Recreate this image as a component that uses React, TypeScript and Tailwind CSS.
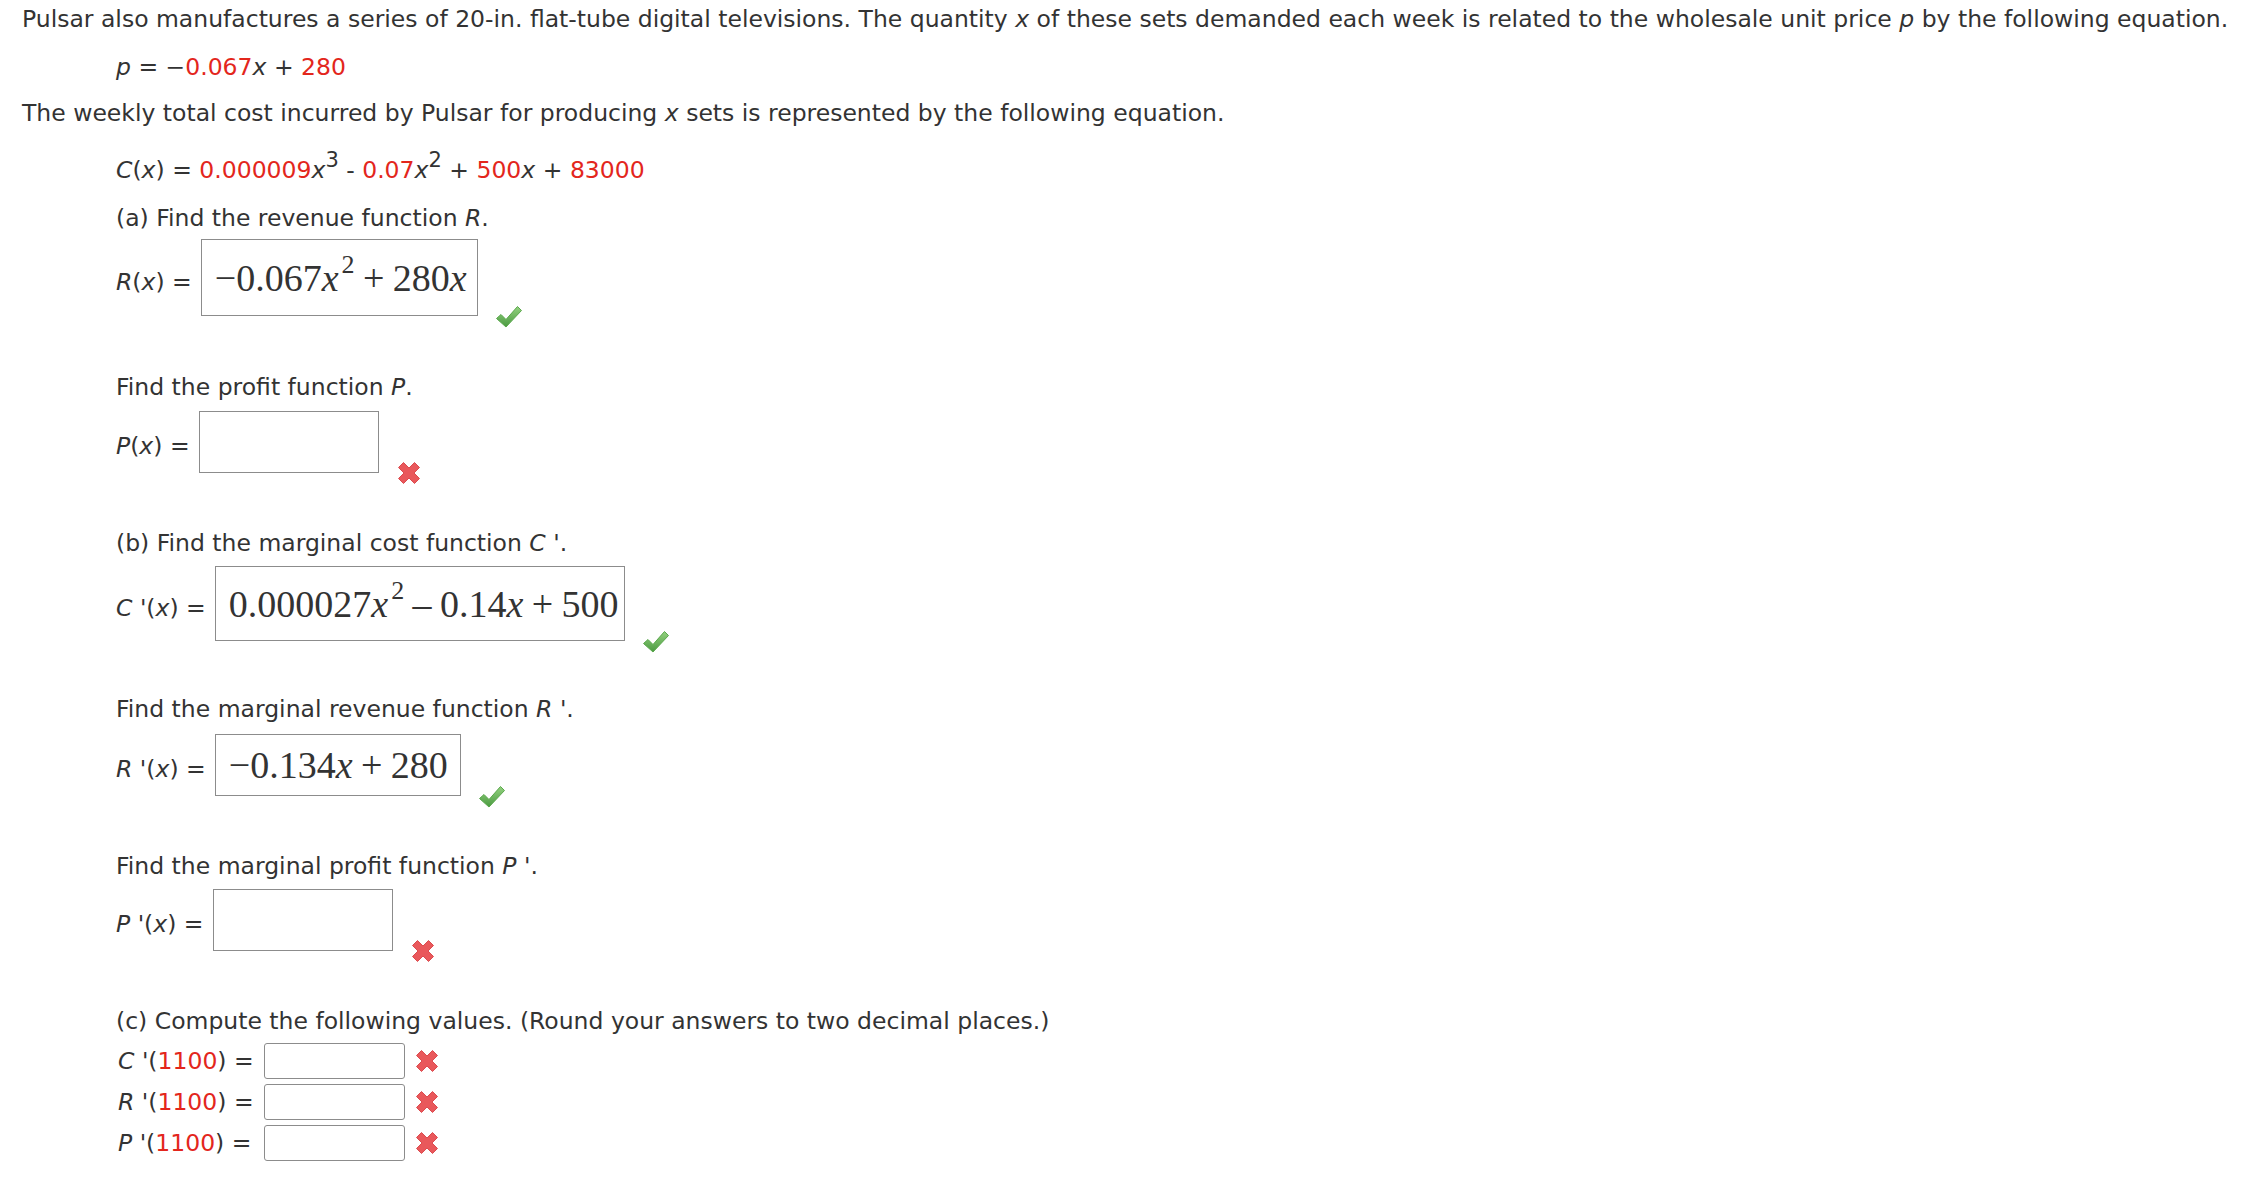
import React from 'react'

const red = 'text-[#e3261c]'

function Check() {
  return (
    <svg width="30" height="27" viewBox="0 0 30 27" className="block">
      <defs>
        <linearGradient id="chk" x1="0" y1="0" x2="0" y2="1">
          <stop offset="0" stopColor="#93d17f" />
          <stop offset="1" stopColor="#4b9a41" />
        </linearGradient>
      </defs>
      <path
        d="M2.5 15.5 L7 11.5 L12 16.5 L23.5 3.5 L27.5 7.5 L12 24 Z"
        fill="url(#chk)"
        stroke="#5aa84c"
        strokeWidth="1"
        strokeLinejoin="round"
      />
    </svg>
  )
}

function Cross() {
  return (
    <svg width="28" height="28" viewBox="0 0 28 28" className="block">
      <path
        d="M3.5 8.5 L8.5 3.5 L14 9 L19.5 3.5 L24.5 8.5 L19 14 L24.5 19.5 L19.5 24.5 L14 19 L8.5 24.5 L3.5 19.5 L9 14 Z"
        fill="#e9585b"
        stroke="#dc4a4e"
        strokeWidth="1"
        strokeLinejoin="round"
      />
    </svg>
  )
}

function V({ children }: { children: React.ReactNode }) {
  return <i>{children}</i>
}

function Op({ children }: { children: React.ReactNode }) {
  return <span className="px-[0.22em]">{children}</span>
}

function Math({ children }: { children: React.ReactNode }) {
  return (
    <span className="font-['Liberation_Serif',serif] text-[38px] text-[#333] leading-none whitespace-nowrap">
      {children}
    </span>
  )
}

interface AnswerRowProps {
  label: React.ReactNode
  boxClass: string
  correct: boolean
  children?: React.ReactNode
}

function AnswerRow({ label, boxClass, correct, children }: AnswerRowProps) {
  return (
    <div className="flex items-center">
      <span className="mt-[8px] whitespace-nowrap">{label}</span>
      <div
        className={`ml-[9px] border border-[#8c8c8c] bg-white flex items-center pl-[13px] ${boxClass}`}
      >
        {children}
      </div>
      <div className="self-end ml-[16px] -mb-[14px]">{correct ? <Check /> : <Cross />}</div>
    </div>
  )
}

function ValueRow({ fn }: { fn: string }) {
  return (
    <div className="flex items-center h-[36px]">
      <span className="whitespace-nowrap w-[146px]">
        <V>{fn}</V> '(<span className={red}>1100</span>) =
      </span>
      <div className="w-[141px] h-[36px] border border-[#8c8c8c] rounded-[3px] bg-white" />
      <div className="ml-[8px]">
        <Cross />
      </div>
    </div>
  )
}

export default function App() {
  return (
    <div className="min-h-screen bg-white text-[#333] font-['DejaVu_Sans',Verdana,sans-serif] text-[23.5px] leading-[28px] pt-[5px] pl-[22px]">
      <p className="whitespace-nowrap">
        Pulsar also manufactures a series of 20-in. flat-tube digital televisions. The quantity{' '}
        <V>x</V> of these sets demanded each week is related to the wholesale unit price <V>p</V> by
        the following equation.
      </p>
      <p className="mt-[20px] pl-[94px]">
        <V>p</V> = −<span className={red}>0.067</span>
        <V>x</V> + <span className={red}>280</span>
      </p>
      <p className="mt-[18px]">
        The weekly total cost incurred by Pulsar for producing <V>x</V> sets is represented by the
        following equation.
      </p>

      <div className="pl-[94px]">
        <p className="mt-[29px]">
          <V>C</V>(<V>x</V>) = <span className={red}>0.000009</span>
          <V>x</V>
          <sup className="text-[21px] -top-[11px]">3</sup> - <span className={red}>0.07</span>
          <V>x</V>
          <sup className="text-[21px] -top-[11px]">2</sup> + <span className={red}>500</span>
          <V>x</V> + <span className={red}>83000</span>
        </p>

        <p className="mt-[20px]">
          (a) Find the revenue function <V>R</V>.
        </p>
        <div className="mt-[7px]">
          <AnswerRow
            label={
              <>
                <V>R</V>(<V>x</V>) =
              </>
            }
            boxClass="w-[277px] h-[77px]"
            correct
          >
            <Math>
              −0.067<i>x</i>
              <sup className="text-[26px] -top-[18px] ml-[3px]">2</sup>
              <Op>+</Op>280<i>x</i>
            </Math>
          </AnswerRow>
        </div>

        <p className="mt-[57px]">
          Find the profit function <V>P</V>.
        </p>
        <div className="mt-[10px]">
          <AnswerRow
            label={
              <>
                <V>P</V>(<V>x</V>) =
              </>
            }
            boxClass="w-[180px] h-[62px]"
            correct={false}
          />
        </div>

        <p className="mt-[56px]">
          (b) Find the marginal cost function <V>C</V> '.
        </p>
        <div className="mt-[9px]">
          <AnswerRow
            label={
              <>
                <V>C</V> '(<V>x</V>) =
              </>
            }
            boxClass="w-[410px] h-[75px]"
            correct
          >
            <Math>
              0.000027<i>x</i>
              <sup className="text-[26px] -top-[18px] ml-[3px]">2</sup>
              <Op>–</Op>0.14<i>x</i>
              <Op>+</Op>500
            </Math>
          </AnswerRow>
        </div>

        <p className="mt-[54px]">
          Find the marginal revenue function <V>R</V> '.
        </p>
        <div className="mt-[11px]">
          <AnswerRow
            label={
              <>
                <V>R</V> '(<V>x</V>) =
              </>
            }
            boxClass="w-[246px] h-[62px]"
            correct
          >
            <Math>
              −0.134<i>x</i>
              <Op>+</Op>280
            </Math>
          </AnswerRow>
        </div>

        <p className="mt-[56px]">
          Find the marginal profit function <V>P</V> '.
        </p>
        <div className="mt-[9px]">
          <AnswerRow
            label={
              <>
                <V>P</V> '(<V>x</V>) =
              </>
            }
            boxClass="w-[180px] h-[62px]"
            correct={false}
          />
        </div>

        <p className="mt-[56px]">
          (c) Compute the following values. (Round your answers to two decimal places.)
        </p>
        <div className="mt-[8px] flex flex-col gap-[5px] pl-[2px]">
          <ValueRow fn="C" />
          <ValueRow fn="R" />
          <ValueRow fn="P" />
        </div>
      </div>
    </div>
  )
}
